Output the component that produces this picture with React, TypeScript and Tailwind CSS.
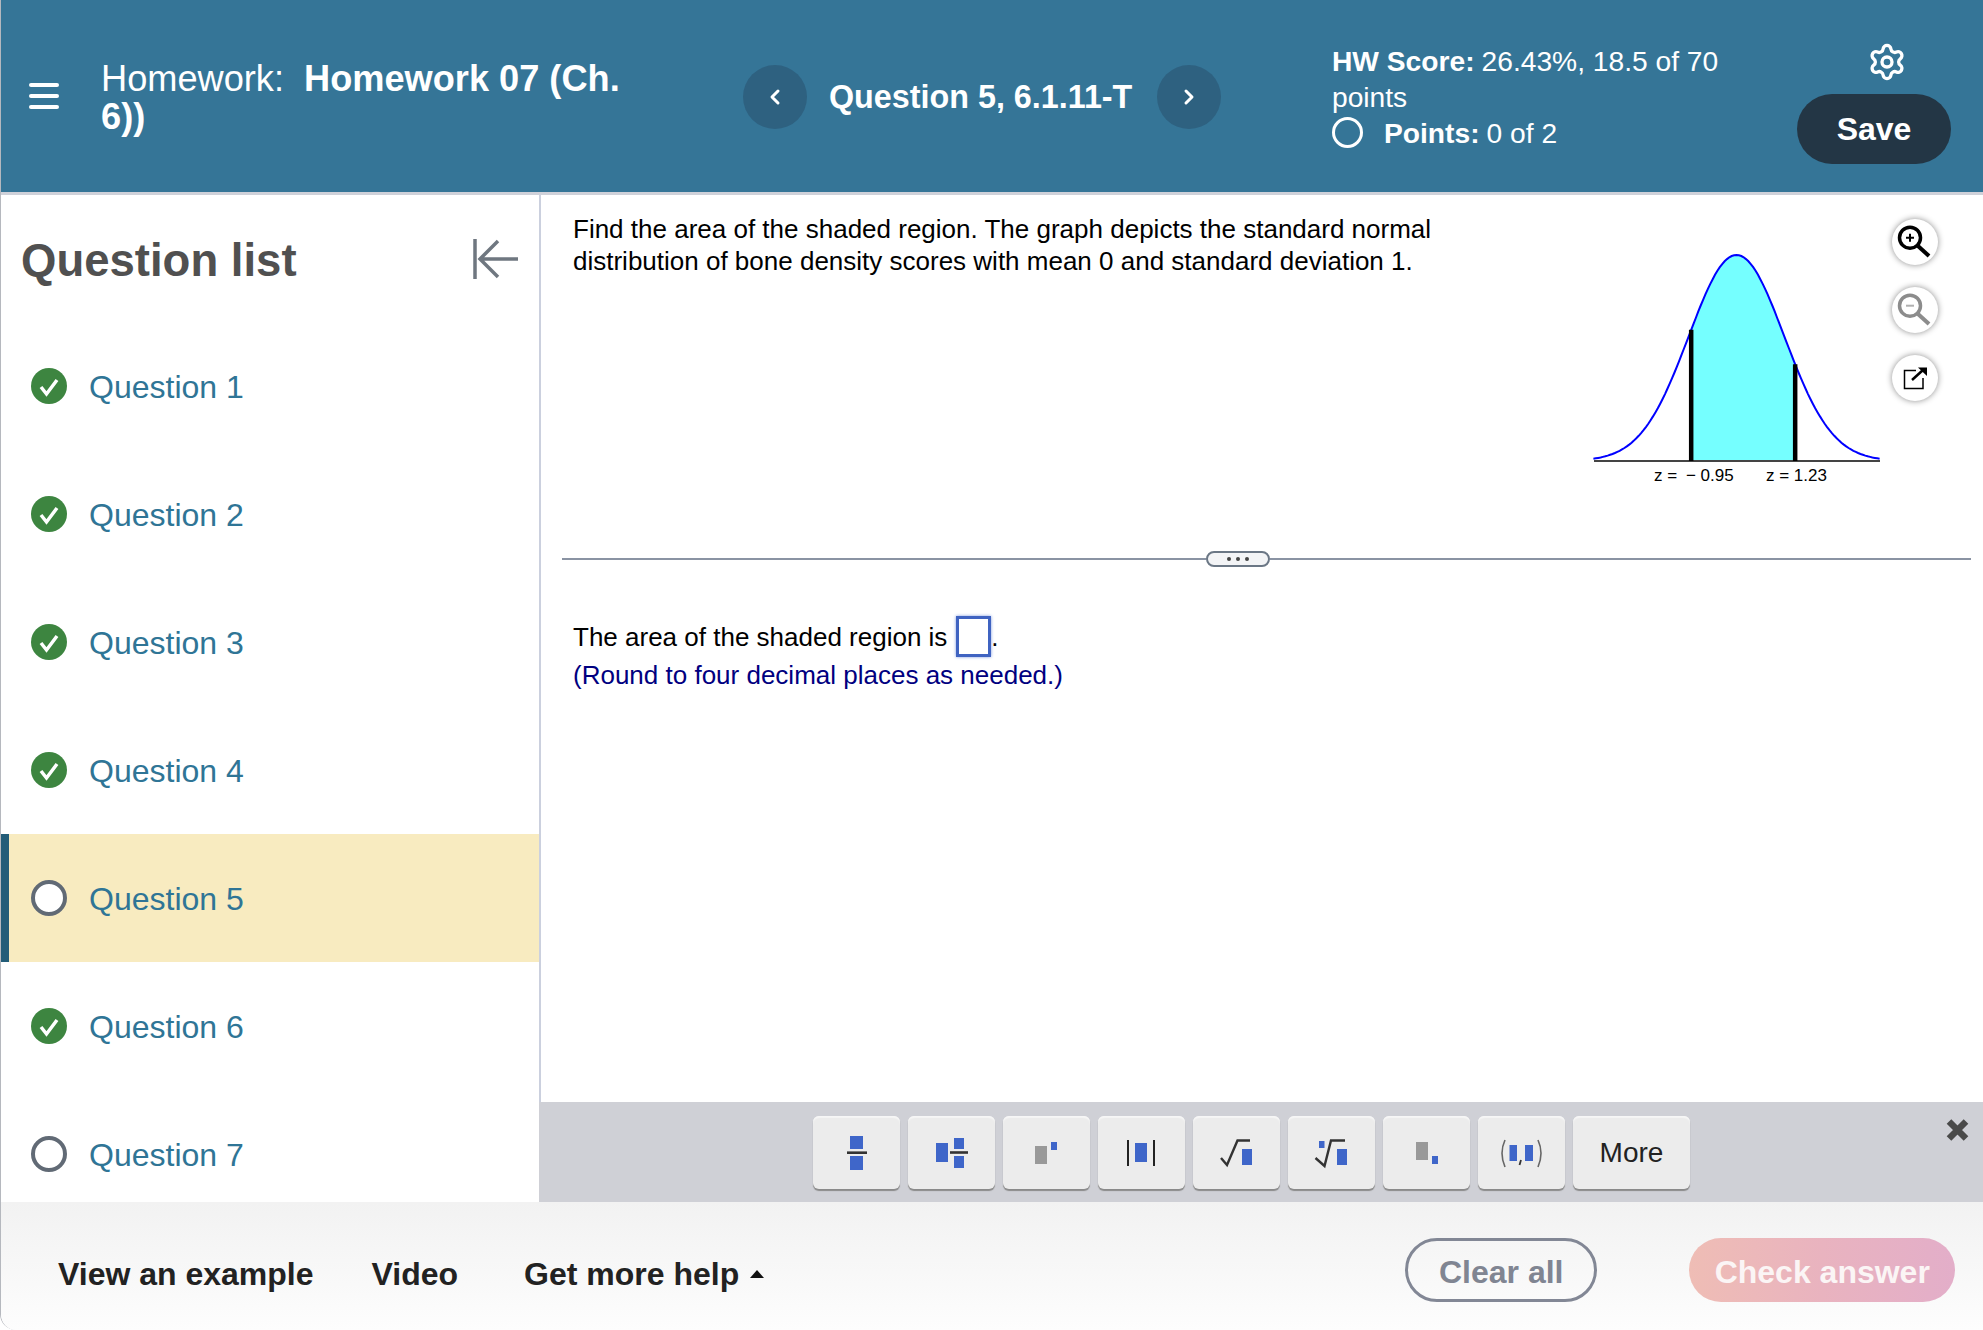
import { ChevronLeft, ChevronRight, Settings } from "lucide-react"

const questions = [
  { n: 1, done: true },
  { n: 2, done: true },
  { n: 3, done: true },
  { n: 4, done: true },
  { n: 5, done: false, active: true },
  { n: 6, done: true },
  { n: 7, done: false },
]

const BLUE = "#3f66c9"
const GRAY = "#999999"
const INK = "#333333"

const Box = ({ x, y, w, h, fill = BLUE }: { x: number; y: number; w: number; h: number; fill?: string }) => (
  <rect x={x} y={y} width={w} height={h} fill={fill} />
)

const mathIcons = [
  <>
    <Box x={37} y={20} w={13} h={13} />
    <path d="M34 36.7H54" stroke={INK} strokeWidth={2.6} />
    <Box x={37} y={40} w={13} h={14} />
  </>,
  <>
    <Box x={28} y={27} w={12} h={19} />
    <Box x={46} y={22} w={10} h={11} />
    <path d="M42 36.5H60" stroke={INK} strokeWidth={2.6} />
    <Box x={46} y={40} w={10} h={12} />
  </>,
  <>
    <Box x={32} y={30} w={12} h={18} fill={GRAY} />
    <Box x={48} y={26} w={6} h={8} />
  </>,
  <>
    <path d="M30 24V50M56 24V50" stroke="#222" strokeWidth={2} />
    <Box x={37} y={27} w={12} h={19} />
  </>,
  <>
    <path d="M28 42L34 49L44.5 24.5H57" fill="none" stroke={INK} strokeWidth={2.4} />
    <Box x={49} y={33} w={10} h={16} />
  </>,
  <>
    <Box x={31} y={25} w={5.5} h={7} />
    <path d="M27.5 42L36.5 50L43 24.5H57" fill="none" stroke={INK} strokeWidth={2.4} />
    <Box x={49} y={33} w={10} h={16} />
  </>,
  <>
    <Box x={33} y={26} w={12} h={18} fill={GRAY} />
    <Box x={49} y={40} w={6} h={8} />
  </>,
  <>
    <path d="M27 24Q21 37 27 51M60 24Q66 37 60 51" fill="none" stroke="#666" strokeWidth={1.6} />
    <Box x={31.5} y={29} w={7.5} h={16} />
    <path d="M43 44L41.5 49" stroke={INK} strokeWidth={1.8} />
    <Box x={47} y={29} w={8} h={16} />
  </>,
]

const StatusIcon = ({ done }: { done: boolean }) =>
  done ? (
    <svg width="36" height="36" viewBox="0 0 36 36" className="shrink-0">
      <circle cx="18" cy="18" r="18" fill="#3d8540" />
      <path d="M10 19L15.5 26L26 12" fill="none" stroke="white" strokeWidth="3.5" />
    </svg>
  ) : (
    <div className="h-[36px] w-[36px] shrink-0 rounded-full border-[4px] border-[#616a75] bg-white" />
  )

const NavButton = ({ children }: { children: React.ReactNode }) => (
  <div className="flex h-[64px] w-[64px] items-center justify-center rounded-full bg-[#2e6180] text-white">
    {children}
  </div>
)

const RoundTool = ({ children }: { children: React.ReactNode }) => (
  <div className="h-[46px] w-[46px] rounded-full bg-white shadow-[0_0_6px_rgba(0,0,0,0.45)]">
    <svg width="46" height="46" viewBox="0 0 46 46">
      {children}
    </svg>
  </div>
)

const NormalCurve = () => {
  const cx = 1736.5
  const k = 47.7
  const base = 461
  const h = 206
  const y = (z: number) => base - h * Math.exp((-z * z) / 2)
  const line = (from: number, to: number) => {
    const pts: string[] = []
    for (let i = 0; i <= 120; i++) {
      const z = from + ((to - from) * i) / 120
      pts.push(`${(cx + z * k).toFixed(1)} ${y(z).toFixed(1)}`)
    }
    return pts
  }
  const a = -0.95
  const b = 1.23
  return (
    <svg width="300" height="245" viewBox="1585 245 300 245" className="shrink-0">
      <path d={`M${cx + a * k} ${base}L${line(a, b).join("L")}L${cx + b * k} ${base}Z`} fill="#75ffff" />
      <path d={`M${line(-3, 3).join("L")}`} fill="none" stroke="#0000ff" strokeWidth="2" />
      <path d="M1594 461H1880" stroke="#444" strokeWidth="2" />
      <path d={`M${cx + a * k} ${y(a)}V461M${cx + b * k} ${y(b)}V461`} stroke="black" strokeWidth="4.5" />
      <text x="1654" y="480.5" fontSize="17" fill="black">
        z = <tspan dx="4">− 0.95</tspan>
      </text>
      <text x="1766" y="480.5" fontSize="17" fill="black">
        z = 1.23
      </text>
    </svg>
  )
}

const App = () => {
  return (
    <div className="flex h-[1330px] w-[1983px] flex-col overflow-hidden rounded-bl-[16px] border-l border-[#b5b8be] bg-white font-['Liberation_Sans',Arial,sans-serif] text-black">
      {/* top bar */}
      <header className="flex h-[195px] shrink-0 items-center border-b-[3px] border-[#cfd1d9] bg-[#357597] text-white">
        <div className="w-[100px] shrink-0 pl-[28px]">
          <div className="flex w-[30px] flex-col gap-[7px]">
            <div className="h-[4px] rounded bg-white" />
            <div className="h-[4px] rounded bg-white" />
            <div className="h-[4px] rounded bg-white" />
          </div>
        </div>
        <div className="w-[642px] shrink-0 pt-[4px]">
          <div className="w-[540px] text-[36.2px] leading-[38px]">
            <div>
              Homework:<b className="ml-[20px]">Homework 07 (Ch.</b>
            </div>
            <b>6))</b>
          </div>
        </div>
        <div className="flex w-[589px] shrink-0 items-center pt-[2px]">
          <NavButton>
            <ChevronLeft size={24} strokeWidth={3} />
          </NavButton>
          <div className="ml-[22px] w-[328px] text-[32.3px] font-bold">Question 5, 6.1.11-T</div>
          <NavButton>
            <ChevronRight size={24} strokeWidth={3} />
          </NavButton>
        </div>
        <div className="w-[465px] shrink-0 pt-[1px] text-[28.2px] leading-[36px]">
          <div className="flex gap-[7px]">
            <b>HW Score:</b>
            <span>26.43%, 18.5 of 70</span>
          </div>
          <div>points</div>
          <div className="flex items-center">
            <div className="h-[31px] w-[31px] rounded-full border-[3px] border-white" />
            <b className="ml-[21px]">Points:</b>
            <span className="ml-[7px]">0 of 2</span>
          </div>
        </div>
        <div className="flex w-[154px] shrink-0 flex-col items-center pt-[13px]">
          <Settings size={40} strokeWidth={2} className="ml-[26px]" />
          <div className="mt-[12px] flex h-[70px] w-[154px] items-center justify-center rounded-full bg-[#233645] pt-[1px] text-[32px] font-bold">
            Save
          </div>
        </div>
      </header>

      <div className="flex min-h-0 flex-1">
        {/* question list */}
        <aside className="w-[538px] shrink-0 overflow-hidden">
          <div className="flex h-[127px] items-center justify-between pl-[20px] pr-[20px]">
            <h2 className="pt-[5px] text-[45.5px] font-bold text-[#505050]">Question list</h2>
            <svg width="46" height="42" viewBox="0 0 46 42" fill="none" stroke="#6f7780" strokeWidth="3.5">
              <path d="M2 1V41M45 21H7M25 3L7 21L25 39" />
            </svg>
          </div>
          {questions.map((q) => (
            <div
              key={q.n}
              className={
                q.active
                  ? "flex h-[128px] items-center border-l-[8px] border-[#235d78] bg-[#f8ebc0] pl-[22px]"
                  : "flex h-[128px] items-center pl-[30px]"
              }
            >
              <StatusIcon done={q.done} />
              <span className="ml-[22px] pt-[1px] text-[32px] text-[#2f7596]">Question {q.n}</span>
            </div>
          ))}
        </aside>

        <div className="flex min-w-0 flex-1 flex-col">
          {/* question + answer */}
          <main className="min-h-0 flex-1 border-l-2 border-[#cbd0de]">
            <div className="flex h-[356px]">
              <div className="w-[900px] shrink-0 pl-[32px] pt-[18px] text-[26px] leading-[32px]">
                <p className="w-[868px]">
                  Find the area of the shaded region. The graph depicts the standard normal distribution of bone
                  density scores with mean 0 and standard deviation 1.
                </p>
              </div>
              <div className="ml-[144px] mt-[50px]">
                <NormalCurve />
              </div>
              <div className="ml-[7px] mt-[24px] flex flex-col gap-[22px]">
                <RoundTool>
                  <circle cx="18" cy="18.7" r="10.5" fill="none" stroke="black" strokeWidth="3.5" />
                  <path d="M26 27L37 37" stroke="black" strokeWidth="4" />
                  <path d="M14 18.7H22M18 14.7V22.7" stroke="black" strokeWidth="2" />
                </RoundTool>
                <RoundTool>
                  <circle cx="18" cy="18.7" r="10.5" fill="none" stroke="#8c8c8c" strokeWidth="3.5" />
                  <path d="M26 27L37 37" stroke="#8c8c8c" strokeWidth="4" />
                  <path d="M14 18.7H22" stroke="#b0b0b0" strokeWidth="2" />
                </RoundTool>
                <RoundTool>
                  <path d="M24 15.5H12.5V33.5H31V23" fill="none" stroke="black" strokeWidth="1.5" />
                  <path d="M20 25L31 15" stroke="black" strokeWidth="2.5" />
                  <path d="M26 12.5H35V21Z" fill="black" />
                </RoundTool>
              </div>
            </div>

            <div className="flex h-[16px] items-center pl-[21px] pr-[12px]">
              <div className="h-[2px] w-[644px] bg-[#8a93a3]" />
              <div className="flex h-[16px] w-[64px] shrink-0 items-center justify-center gap-[5px] rounded-full border-2 border-[#6b7785] bg-[#f3f4f6]">
                <span className="h-[4px] w-[4px] rounded-full bg-[#444]" />
                <span className="h-[4px] w-[4px] rounded-full bg-[#444]" />
                <span className="h-[4px] w-[4px] rounded-full bg-[#444]" />
              </div>
              <div className="h-[2px] flex-1 bg-[#8a93a3]" />
            </div>

            <div className="pl-[32px] pt-[49px] text-[26px] leading-[32px]">
              <div className="flex h-[41px] items-center">
                The area of the shaded region is
                <div className="ml-[9px] h-[41px] w-[35px] border-[3px] border-[#3f63c1] bg-white shadow-[0_0_3px_#7f9ae0]" />
                .
              </div>
              <div className="mt-[2px] text-[#000080]">(Round to four decimal places as needed.)</div>
            </div>
          </main>

          {/* math palette */}
          <div className="flex h-[100px] shrink-0 items-start gap-[8px] bg-[#cfd0d6] pl-[274px] pt-[14px]">
            {mathIcons.map((icon, i) => (
              <div
                key={i}
                className="h-[73px] w-[87px] rounded-[6px] bg-[#ececec] shadow-[0_2px_1px_#8a8a8a,inset_0_2px_1px_#f6f6f6]"
              >
                <svg width="87" height="73" viewBox="0 0 87 73">
                  {icon}
                </svg>
              </div>
            ))}
            <div className="flex h-[73px] w-[117px] items-center justify-center rounded-[6px] bg-[#ececec] text-[28px] text-[#222] shadow-[0_2px_1px_#8a8a8a,inset_0_2px_1px_#f6f6f6]">
              More
            </div>
            <svg width="23" height="24" viewBox="0 0 23 24" className="ml-auto mr-[14px] mt-[2px]">
              <path d="M3 3.5L20 20.5M20 3.5L3 20.5" stroke="#4a4a4a" strokeWidth="6.5" />
            </svg>
          </div>
        </div>
      </div>

      {/* bottom bar */}
      <footer className="flex h-[128px] shrink-0 items-center bg-gradient-to-b from-[#f2f2f2] to-[#fdfdfd] pl-[57px] pt-[8px] text-[32px] font-bold text-[#222]">
        <span className="pt-[8px]">View an example</span>
        <span className="ml-[58px] pt-[8px]">Video</span>
        <span className="ml-[66px] pt-[8px]">Get more help</span>
        <svg width="14" height="8" viewBox="0 0 14 8" className="ml-[11px] mt-[8px]">
          <path d="M7 0L14 8H0Z" fill="#111" />
        </svg>
        <div className="ml-[641px] flex h-[64px] w-[192px] items-center justify-center rounded-full border-[3px] border-[#828795] pt-[3px] text-[#808592]">
          Clear all
        </div>
        <div className="ml-[92px] flex h-[64px] w-[266px] items-center justify-center rounded-full bg-gradient-to-r from-[#efbdb5] via-[#e9b3bf] to-[#e3aec9] pt-[3px] text-[#fbf5f5]">
          Check answer
        </div>
      </footer>
    </div>
  )
}

export default App
